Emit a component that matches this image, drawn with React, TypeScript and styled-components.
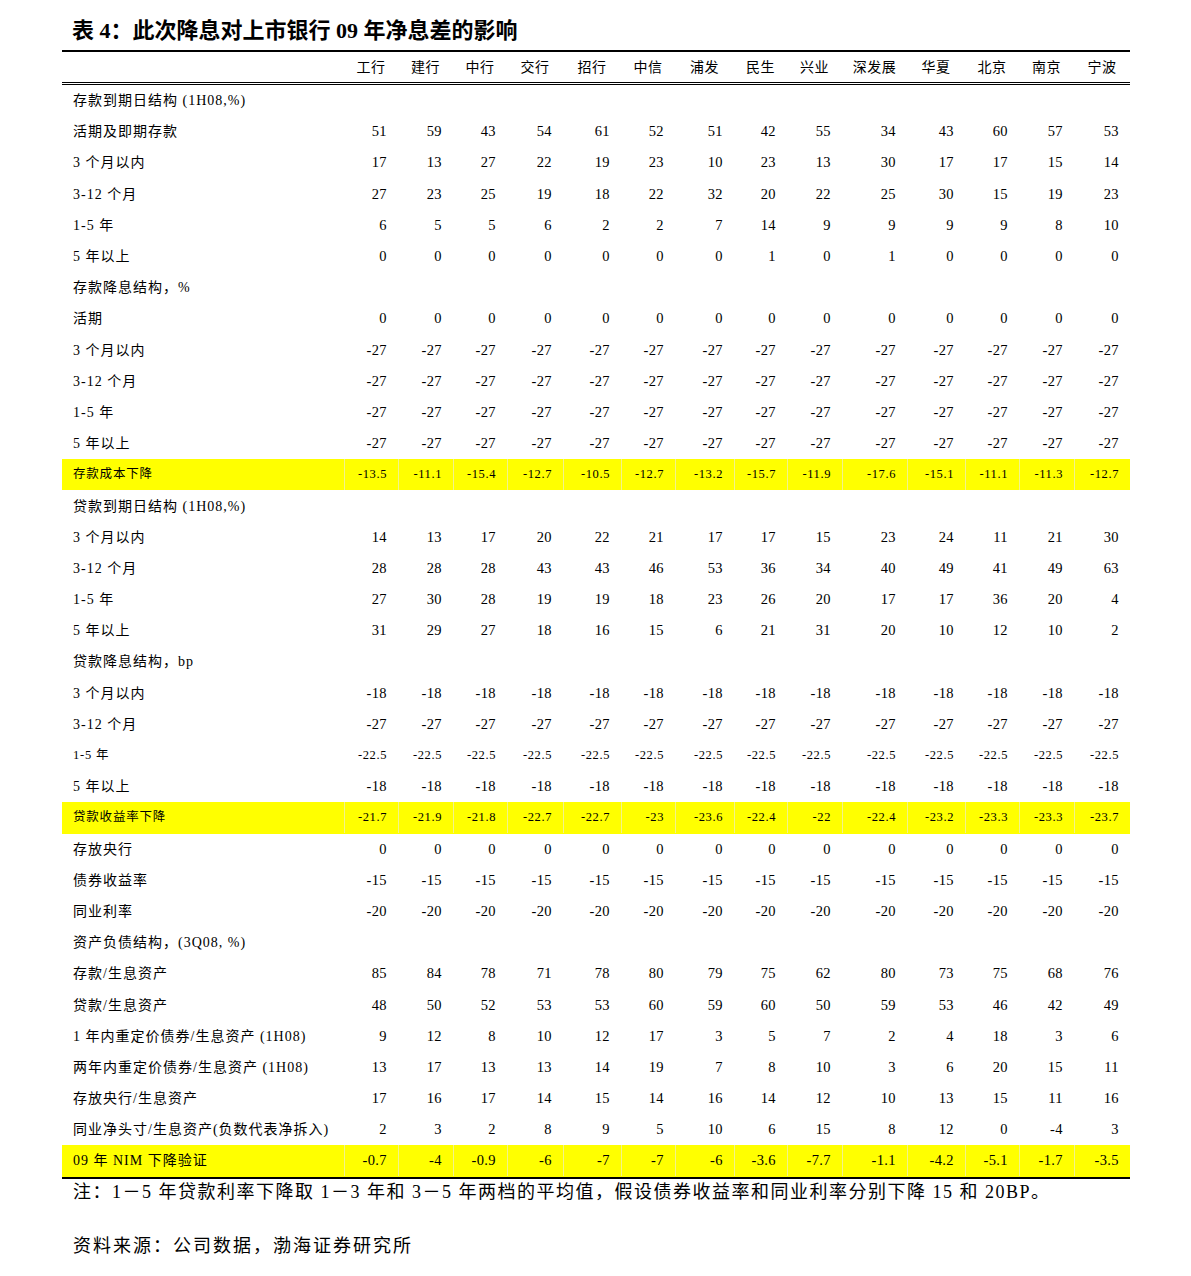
import styled, { createGlobalStyle } from 'styled-components'

const GlobalStyle = createGlobalStyle`
  body {
    margin: 0;
    background: #ffffff;
    color: #000000;
    font-family: 'Liberation Serif', 'Noto Sans CJK SC', serif;
  }
`

const COLS = '282px 54px 55px 54px 56px 58px 54px 59px 53px 55px 65px 58px 54px 55px 56px'

const banks = ['工行', '建行', '中行', '交行', '招行', '中信', '浦发', '民生', '兴业', '深发展', '华夏', '北京', '南京', '宁波']

type RowData = {
  label: string
  values?: (number | string)[]
  highlight?: boolean
  small?: boolean
}

const fill = (v: number | string) => Array(14).fill(v)

const rows: RowData[] = [
  { label: '存款到期日结构 (1H08,%)' },
  { label: '活期及即期存款', values: [51, 59, 43, 54, 61, 52, 51, 42, 55, 34, 43, 60, 57, 53] },
  { label: '3 个月以内', values: [17, 13, 27, 22, 19, 23, 10, 23, 13, 30, 17, 17, 15, 14] },
  { label: '3-12 个月', values: [27, 23, 25, 19, 18, 22, 32, 20, 22, 25, 30, 15, 19, 23] },
  { label: '1-5 年', values: [6, 5, 5, 6, 2, 2, 7, 14, 9, 9, 9, 9, 8, 10] },
  { label: '5 年以上', values: [0, 0, 0, 0, 0, 0, 0, 1, 0, 1, 0, 0, 0, 0] },
  { label: '存款降息结构，%' },
  { label: '活期', values: fill(0) },
  { label: '3 个月以内', values: fill(-27) },
  { label: '3-12 个月', values: fill(-27) },
  { label: '1-5 年', values: fill(-27) },
  { label: '5 年以上', values: fill(-27) },
  {
    label: '存款成本下降',
    highlight: true,
    small: true,
    values: ['-13.5', '-11.1', '-15.4', '-12.7', '-10.5', '-12.7', '-13.2', '-15.7', '-11.9', '-17.6', '-15.1', '-11.1', '-11.3', '-12.7'],
  },
  { label: '贷款到期日结构 (1H08,%)' },
  { label: '3 个月以内', values: [14, 13, 17, 20, 22, 21, 17, 17, 15, 23, 24, 11, 21, 30] },
  { label: '3-12 个月', values: [28, 28, 28, 43, 43, 46, 53, 36, 34, 40, 49, 41, 49, 63] },
  { label: '1-5 年', values: [27, 30, 28, 19, 19, 18, 23, 26, 20, 17, 17, 36, 20, 4] },
  { label: '5 年以上', values: [31, 29, 27, 18, 16, 15, 6, 21, 31, 20, 10, 12, 10, 2] },
  { label: '贷款降息结构，bp' },
  { label: '3 个月以内', values: fill(-18) },
  { label: '3-12 个月', values: fill(-27) },
  { label: '1-5 年', small: true, values: fill('-22.5') },
  { label: '5 年以上', values: fill(-18) },
  {
    label: '贷款收益率下降',
    highlight: true,
    small: true,
    values: ['-21.7', '-21.9', '-21.8', '-22.7', '-22.7', '-23', '-23.6', '-22.4', '-22', '-22.4', '-23.2', '-23.3', '-23.3', '-23.7'],
  },
  { label: '存放央行', values: fill(0) },
  { label: '债券收益率', values: fill(-15) },
  { label: '同业利率', values: fill(-20) },
  { label: '资产负债结构，(3Q08, %)' },
  { label: '存款/生息资产', values: [85, 84, 78, 71, 78, 80, 79, 75, 62, 80, 73, 75, 68, 76] },
  { label: '贷款/生息资产', values: [48, 50, 52, 53, 53, 60, 59, 60, 50, 59, 53, 46, 42, 49] },
  { label: '1 年内重定价债券/生息资产 (1H08)', values: [9, 12, 8, 10, 12, 17, 3, 5, 7, 2, 4, 18, 3, 6] },
  { label: '两年内重定价债券/生息资产 (1H08)', values: [13, 17, 13, 13, 14, 19, 7, 8, 10, 3, 6, 20, 15, 11] },
  { label: '存放央行/生息资产', values: [17, 16, 17, 14, 15, 14, 16, 14, 12, 10, 13, 15, 11, 16] },
  { label: '同业净头寸/生息资产(负数代表净拆入)', values: [2, 3, 2, 8, 9, 5, 10, 6, 15, 8, 12, 0, -4, 3] },
  {
    label: '09 年 NIM 下降验证',
    highlight: true,
    values: ['-0.7', '-4', '-0.9', '-6', '-7', '-7', '-6', '-3.6', '-7.7', '-1.1', '-4.2', '-5.1', '-1.7', '-3.5'],
  },
]

const Page = styled.div`
  padding: 16px 61px 20px 62px;
`

const Title = styled.h1`
  margin: 0 0 4px;
  padding-left: 10px;
  font-size: 22px;
  line-height: 30px;
  font-weight: bold;
  letter-spacing: 0;
`

const Table = styled.div`
  border-top: 2px solid #000;
  border-bottom: 2px solid #000;
`

const HeaderRow = styled.div`
  display: grid;
  grid-template-columns: ${COLS};
  height: 30px;
  border-bottom: 3px double #000;
`

const HeaderCell = styled.div`
  padding-top: 2px;
  text-align: center;
  font-size: 14px;
  line-height: 28px;
  letter-spacing: 0.5px;
`

const Row = styled.div<{ $highlight?: boolean }>`
  display: grid;
  grid-template-columns: ${COLS};
  height: 31.2px;
  align-items: center;
  background: ${(p) => (p.$highlight ? '#ffff00' : 'transparent')};
`

const Label = styled.div<{ $small?: boolean }>`
  padding-left: 11px;
  font-size: ${(p) => (p.$small ? '12.5px' : '14px')};
  line-height: 31px;
  letter-spacing: ${(p) => (p.$small ? '0.8px' : '1px')};
  white-space: nowrap;
`

const Value = styled.div<{ $small?: boolean; $highlight?: boolean }>`
  text-align: right;
  padding-right: 11px;
  font-size: ${(p) => (p.$small ? '12.5px' : '14.5px')};
  letter-spacing: ${(p) => (p.$small ? '0.6px' : '0.4px')};
  line-height: 31px;
  border-left: ${(p) => (p.$highlight ? '1px solid #f2f28c' : 'none')};
`

const Note = styled.p`
  margin: 1px 0 0;
  padding-left: 11px;
  font-size: 18px;
  line-height: 24px;
  letter-spacing: 1.5px;
`

const Source = styled(Note)`
  margin-top: 30px;
  letter-spacing: 2px;
`

export default function App() {
  return (
    <>
      <GlobalStyle />
      <Page>
        <Title>表 4：此次降息对上市银行 09 年净息差的影响</Title>
        <Table>
          <HeaderRow>
            <div />
            {banks.map((b) => (
              <HeaderCell key={b}>{b}</HeaderCell>
            ))}
          </HeaderRow>
          {rows.map((r, i) => (
            <Row key={i} $highlight={r.highlight}>
              <Label $small={r.small}>{r.label}</Label>
              {(r.values ?? fill('')).map((v, j) => (
                <Value key={j} $small={r.small} $highlight={r.highlight}>
                  {v}
                </Value>
              ))}
            </Row>
          ))}
        </Table>
        <Note>注：1－5 年贷款利率下降取 1－3 年和 3－5 年两档的平均值，假设债券收益率和同业利率分别下降 15 和 20BP。</Note>
        <Source>资料来源：公司数据，渤海证券研究所</Source>
      </Page>
    </>
  )
}
